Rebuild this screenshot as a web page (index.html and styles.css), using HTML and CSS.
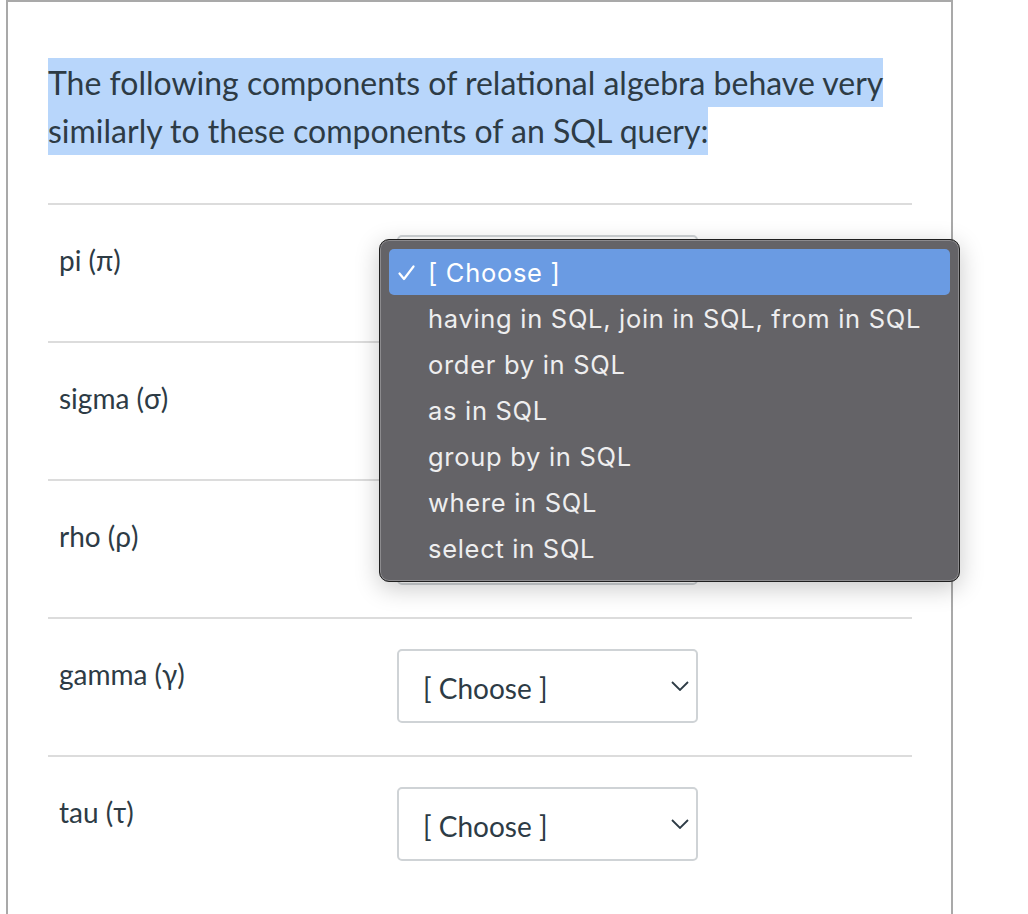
FILE: index.html
```html
<!DOCTYPE html>
<html lang="en">

<head>
    <meta charset="UTF-8">
    <title>Quiz Question - Matching</title>
    <link rel="stylesheet" href="styles.css">
</head>

<body>
    <div class="question">
        <p class="question-text"><span class="selected">The following components of relational algebra behave very similarly to these components of an SQL query:</span></p>

        <div class="match-row">
            <div class="match-label">pi (π)</div>
            <div class="select-wrap">
                <div class="fake-select">
                    <span>[ Choose ]</span>
                    <svg class="chevron" width="18" height="10" viewBox="0 0 18 10"><path d="M1 1l8 8 8-8" fill="none" stroke="#2d3b45" stroke-width="1.8"/></svg>
                </div>

                <!-- open native menu -->
                <ul class="menu">
                    <li class="menu-item active">
                        <svg class="check" width="17" height="16" viewBox="0 0 17 16"><path d="M1.5 8.5l4.5 5.5 9.5-12.5" fill="none" stroke="#fff" stroke-width="2.2" stroke-linecap="round" stroke-linejoin="round"/></svg>
                        [ Choose ]
                    </li>
                    <li class="menu-item">having in SQL, join in SQL, from in SQL</li>
                    <li class="menu-item">order by in SQL</li>
                    <li class="menu-item">as in SQL</li>
                    <li class="menu-item">group by in SQL</li>
                    <li class="menu-item">where in SQL</li>
                    <li class="menu-item">select in SQL</li>
                </ul>
            </div>
        </div>

        <div class="match-row">
            <div class="match-label">sigma (σ)</div>
            <div class="select-wrap">
                <div class="fake-select">
                    <span>[ Choose ]</span>
                    <svg class="chevron" width="18" height="10" viewBox="0 0 18 10"><path d="M1 1l8 8 8-8" fill="none" stroke="#2d3b45" stroke-width="1.8"/></svg>
                </div>
            </div>
        </div>

        <div class="match-row">
            <div class="match-label">rho (ρ)</div>
            <div class="select-wrap">
                <div class="fake-select">
                    <span>[ Choose ]</span>
                    <svg class="chevron" width="18" height="10" viewBox="0 0 18 10"><path d="M1 1l8 8 8-8" fill="none" stroke="#2d3b45" stroke-width="1.8"/></svg>
                </div>
            </div>
        </div>

        <div class="match-row">
            <div class="match-label">gamma (γ)</div>
            <div class="select-wrap">
                <div class="fake-select">
                    <span>[ Choose ]</span>
                    <svg class="chevron" width="18" height="10" viewBox="0 0 18 10"><path d="M1 1l8 8 8-8" fill="none" stroke="#2d3b45" stroke-width="1.8"/></svg>
                </div>
            </div>
        </div>

        <div class="match-row">
            <div class="match-label">tau (τ)</div>
            <div class="select-wrap">
                <div class="fake-select">
                    <span>[ Choose ]</span>
                    <svg class="chevron" width="18" height="10" viewBox="0 0 18 10"><path d="M1 1l8 8 8-8" fill="none" stroke="#2d3b45" stroke-width="1.8"/></svg>
                </div>
            </div>
        </div>
    </div>
</body>

</html>
```

FILE: styles.css
```css
body {
    font-family: Lato, "Open Sans", sans-serif;
    color: #2d3b45;
    background-color: #fff;
    margin: 0;
}

.question {
    box-sizing: border-box;
    width: 947px;
    min-height: 1000px;
    margin-left: 6px;
    padding: 57px 39px 0 40px;
    border: 2px solid #a9a9a9;
    border-bottom: none;
}

.question-text {
    margin: 0 0 48px;
    font-size: 32px;
    line-height: 48px;
}

.selected {
    background: #b8d6fb;
    padding: 5px 0;
}

.match-row {
    display: grid;
    grid-template-columns: 349px 301px;
    padding: 30px 0 32px;
    border-top: 2px solid #dcdcdc;
}

.match-label {
    padding: 7px 0 0 11px;
    font-size: 28px;
    line-height: 36px;
}

.select-wrap {
    position: relative;
}

.fake-select {
    box-sizing: border-box;
    height: 74px;
    display: flex;
    align-items: center;
    justify-content: space-between;
    padding: 4px 7px 0 24px;
    border: 2px solid #cfd3d6;
    border-radius: 5px;
    font-size: 28px;
}

.chevron {
    margin-top: -4px;
}

.menu {
    position: absolute;
    top: 4px;
    left: -18px;
    z-index: 5;
    box-sizing: border-box;
    width: 581px;
    margin: 0;
    padding: 9px 9px 10px;
    list-style: none;
    background: #646367;
    border: 1px solid #1f1f1f;
    border-radius: 10px;
    box-shadow: inset 0 0 0 1px #8c8b8e, 0 6px 24px rgba(0, 0, 0, 0.22);
}

.menu-item {
    position: relative;
    height: 46px;
    line-height: 48px;
    padding-left: 39px;
    border-radius: 5px;
    font-family: Inter, "Liberation Sans", sans-serif;
    font-size: 25.5px;
    letter-spacing: 0.7px;
    color: #eeeeef;
    white-space: nowrap;
}

.menu-item.active {
    background: #6a9be3;
    color: #fff;
}

.check {
    position: absolute;
    left: 9px;
    top: 16px;
}
```
